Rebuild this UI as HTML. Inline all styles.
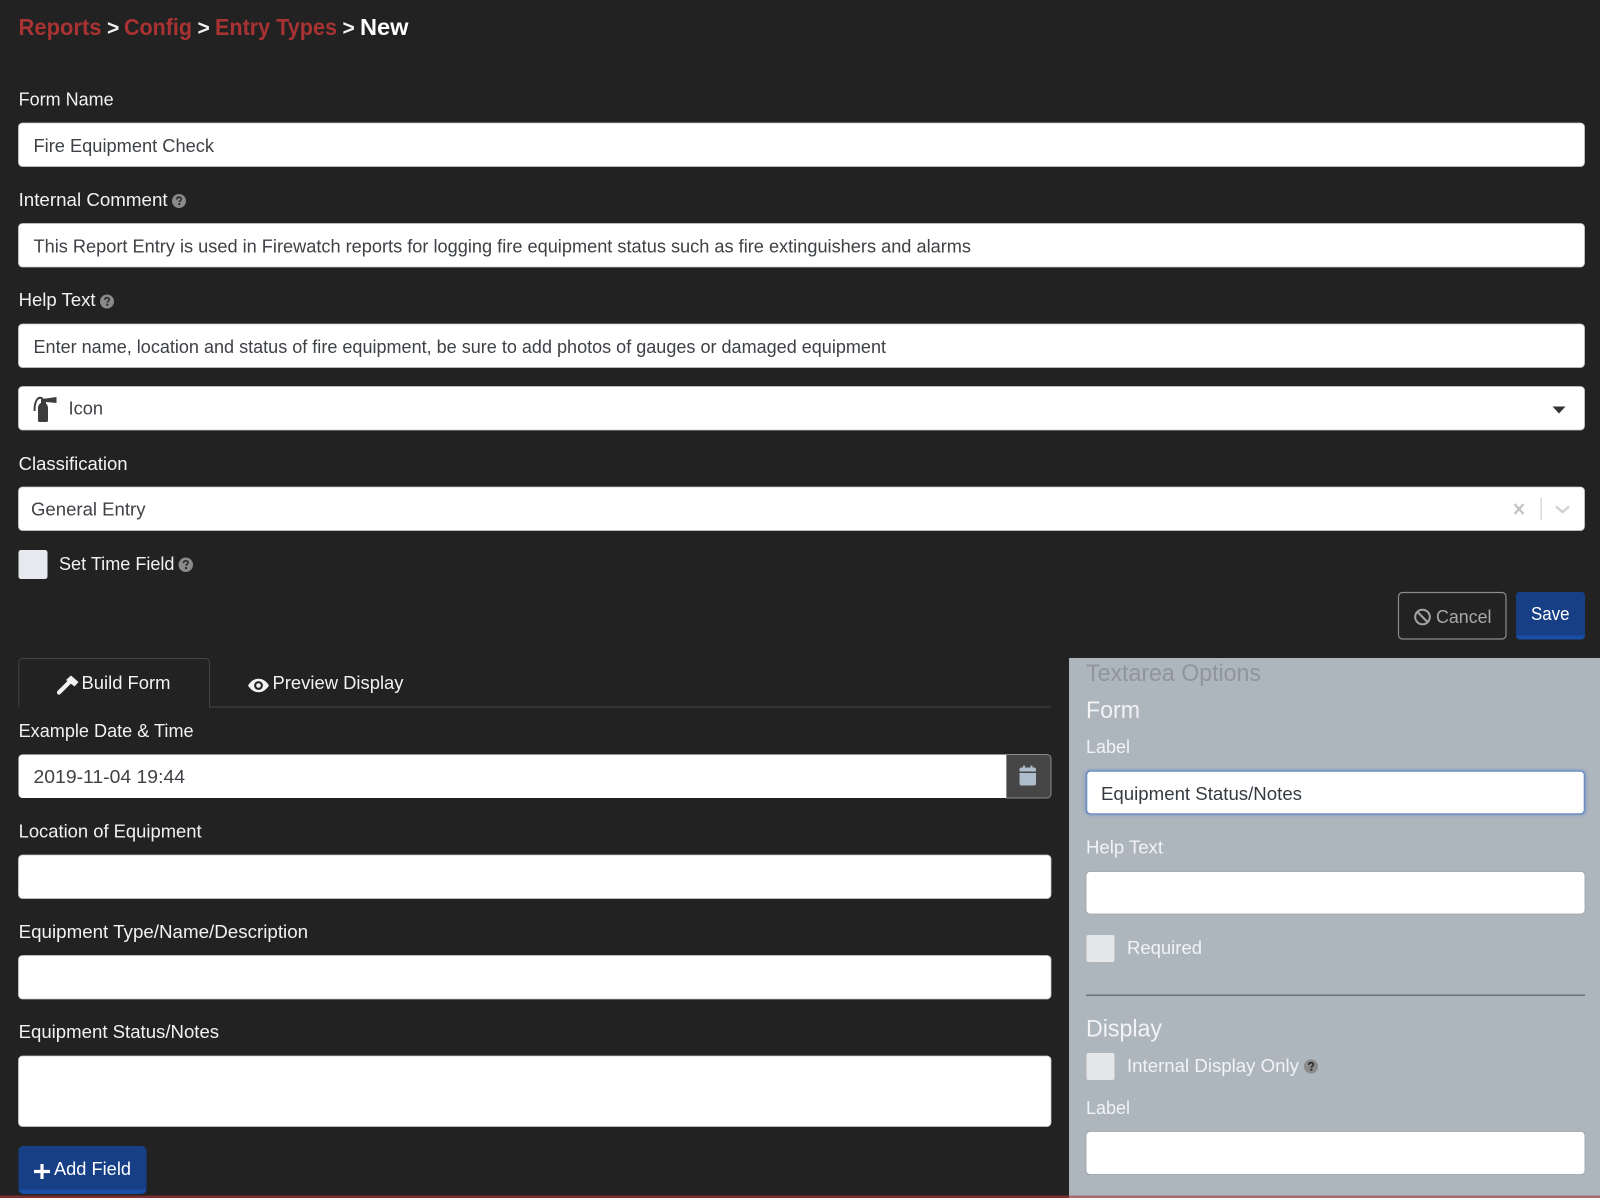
<!DOCTYPE html>
<html lang="en"><head><meta charset="utf-8"><title>New Entry Type</title>
<style>
html,body{margin:0;padding:0;background:#222;width:1600px;height:1198px;overflow:hidden}
svg{display:block}
text{font-family:"Liberation Sans",sans-serif;font-size:18.5px;fill:#f2f2f2}
.in{fill:#3e4145}
.p{fill:#f1f3f5}
.h{font-size:24px}
</style></head><body>
<svg xmlns="http://www.w3.org/2000/svg" width="1600" height="1198" viewBox="0 0 1600 1198">
<defs>
<symbol id="q" viewBox="0 0 14 14"><circle cx="7" cy="7" r="7" fill="#8a8a8a"/><path d="M4.8 5.4C4.9 3.900 5.900 3.200 7.100 3.200 8.400 3.200 9.300 4 9.300 5.100 9.300 6.600 7.300 6.600 7.300 8.100" fill="none" stroke="#2a2a2a" stroke-width="1.600"/><rect x="6.300" y="9.200" width="2" height="1.900" fill="#2a2a2a"/></symbol>
<filter id="glow" x="-5%" y="-30%" width="110%" height="160%"><feGaussianBlur stdDeviation="1.500"/></filter>
</defs>
<rect width="1600" height="1198" fill="#222"/>

<!-- breadcrumb -->
<g style="font-size:23.500px;font-weight:700">
<text x="18.500" y="35" textLength="83" lengthAdjust="spacingAndGlyphs" style="fill:#a93232;font-size:23.500px">Reports</text>
<text x="107" y="35" style="font-size:21px">&gt;</text>
<text x="124" y="35" textLength="68" lengthAdjust="spacingAndGlyphs" style="fill:#a93232;font-size:23.500px">Config</text>
<text x="197.500" y="35" style="font-size:21px">&gt;</text>
<text x="215" y="35" textLength="122" lengthAdjust="spacingAndGlyphs" style="fill:#a93232;font-size:23.500px">Entry Types</text>
<text x="342.500" y="35" style="font-size:21px">&gt;</text>
<text x="360" y="35" textLength="48.500" lengthAdjust="spacingAndGlyphs" style="font-size:23.500px;fill:#fff">New</text>
</g>

<!-- top form -->
<text x="18.600" y="105.500" textLength="95" lengthAdjust="spacingAndGlyphs">Form Name</text>
<rect x="18.500" y="123" width="1566" height="43.500" rx="4" fill="#fff" stroke="#c8c8c8" stroke-width=".8"/>
<text class="in" x="33.500" y="152.200" textLength="180.500" lengthAdjust="spacingAndGlyphs">Fire Equipment Check</text>

<text x="18.600" y="206" textLength="149" lengthAdjust="spacingAndGlyphs">Internal Comment</text>
<use href="#q" x="172" y="194" width="14" height="14"/>
<rect x="18.500" y="223.500" width="1566" height="43.500" rx="4" fill="#fff" stroke="#c8c8c8" stroke-width=".8"/>
<text class="in" x="33.500" y="252.500" textLength="937.500" lengthAdjust="spacingAndGlyphs">This Report Entry is used in Firewatch reports for logging fire equipment status such as fire extinguishers and alarms</text>

<text x="18.600" y="306" textLength="77" lengthAdjust="spacingAndGlyphs">Help Text</text>
<use href="#q" x="100" y="294.500" width="14" height="14"/>
<rect x="18.500" y="324" width="1566" height="43.500" rx="4" fill="#fff" stroke="#c8c8c8" stroke-width=".8"/>
<text class="in" x="33.500" y="353" textLength="852.500" lengthAdjust="spacingAndGlyphs">Enter name, location and status of fire equipment, be sure to add photos of gauges or damaged equipment</text>

<rect x="18.500" y="386.500" width="1566" height="43.500" rx="4" fill="#fff" stroke="#c8c8c8" stroke-width=".8"/>
<g fill="#3d3d3d">
<path d="M38 408C38 405.500 39.500 403.500 41 403L45 403C46.500 403.500 48 405.500 48 408L48 420.500C48 421.400 47.500 422 46.500 422L39.500 422C38.500 422 38 421.400 38 420.500Z"/>
<path d="M41 398.500H46L56.500 397V403L46 402V403.500H41Z"/>
<path d="M42.500 398.500C38 396 34.500 400.500 34.500 411" fill="none" stroke="#3d3d3d" stroke-width="1.900"/>
</g>
<text class="in" x="68.500" y="414.500" textLength="34.500" lengthAdjust="spacingAndGlyphs">Icon</text>
<path d="M1552.500 406.500H1565.500L1559 413.500Z" fill="#333"/>

<text x="18.600" y="470" textLength="109" lengthAdjust="spacingAndGlyphs">Classification</text>
<rect x="18.500" y="487" width="1566" height="43.500" rx="4" fill="#fff" stroke="#c8c8c8" stroke-width=".8"/>
<text class="in" x="31" y="515.300" textLength="114.500" lengthAdjust="spacingAndGlyphs">General Entry</text>
<path d="M1514.500 504L1523.500 514M1523.500 504L1514.500 514" stroke="#c4c4c4" stroke-width="2.400" fill="none"/>
<rect x="1540.500" y="498" width="1.200" height="22" fill="#d0d0d0"/>
<path d="M1556 506.500L1562.500 512L1569 506.500" stroke="#cfcfcf" stroke-width="2.400" fill="none"/>

<rect x="18.500" y="550" width="29" height="29" rx="2.500" fill="#e6e9ee"/>
<text x="59" y="570" textLength="115.500" lengthAdjust="spacingAndGlyphs">Set Time Field</text>
<use href="#q" x="178.500" y="557.500" width="14.500" height="14.500"/>

<!-- buttons -->
<rect x="1398.500" y="592.500" width="107.500" height="46.500" rx="4" fill="#222" stroke="#8d8d8d" stroke-width="1.200"/>
<circle cx="1422.500" cy="617" r="7.300" fill="none" stroke="#a5a5a5" stroke-width="2"/>
<path d="M1417.500 612L1427.500 622" stroke="#a5a5a5" stroke-width="2"/>
<text x="1436" y="623" textLength="55.500" lengthAdjust="spacingAndGlyphs" style="fill:#a8a8a8">Cancel</text>
<rect x="1516" y="592" width="69" height="47.500" rx="4" fill="#1a4da5"/>
<path d="M1516 596a4 4 0 0 1 4-4H1581a4 4 0 0 1 4 4V635.500H1516Z" fill="#163f86"/>
<text x="1531" y="620" textLength="38.500" lengthAdjust="spacingAndGlyphs" style="fill:#fff">Save</text>

<!-- tabs -->
<path d="M18.800 707V662.500a4 4 0 0 1 4-4H205.500a4 4 0 0 1 4 4V707H1051" fill="none" stroke="#444" stroke-width="1"/>
<path d="M59 692.500L70.500 681" stroke="#f2f2f2" stroke-width="4.200" stroke-linecap="round"/>
<path d="M66 680L71 675.500L78.500 682L74.500 686.500Z" fill="#f2f2f2"/>
<text x="81.500" y="689.200" textLength="89" lengthAdjust="spacingAndGlyphs">Build Form</text>
<path d="M248 685.500C251 680.800 254.500 678.800 258.500 678.800 262.500 678.800 266 680.800 269 685.500 266 690.200 262.500 692.200 258.500 692.200 254.500 692.200 251 690.200 248 685.500Z" fill="#f2f2f2"/>
<circle cx="258.500" cy="685.500" r="4.400" fill="#222"/>
<circle cx="258.500" cy="685.500" r="2.300" fill="#f2f2f2"/>
<text x="272.500" y="689.200" textLength="131" lengthAdjust="spacingAndGlyphs">Preview Display</text>

<!-- left form -->
<text x="18.600" y="737" textLength="175" lengthAdjust="spacingAndGlyphs">Example Date &amp; Time</text>
<path d="M22.500 754.500H1006.500V798H22.500a4 4 0 0 1-4-4V758.500a4 4 0 0 1 4-4Z" fill="#fff"/>
<text class="in" x="33.500" y="783" textLength="151.500" lengthAdjust="spacingAndGlyphs">2019-11-04 19:44</text>
<path d="M1006.500 754.500H1047a4 4 0 0 1 4 4V794a4 4 0 0 1-4 4H1006.500Z" fill="#464646" stroke="#8a8a8a" stroke-width="1"/>
<path d="M1019.500 773H1036V783.500a2 2 0 0 1-2 2H1021.500a2 2 0 0 1-2-2Z" fill="#aebccb"/>
<path d="M1019.500 771.500V769.500a2 2 0 0 1 2-2H1023V765.500H1025V767.500H1030.500V765.500H1032.500V767.500H1034a2 2 0 0 1 2 2V771.500Z" fill="#aebccb"/>

<text x="18.600" y="837.500" textLength="183" lengthAdjust="spacingAndGlyphs">Location of Equipment</text>
<rect x="18.500" y="855" width="1032.500" height="43.500" rx="4" fill="#fff" stroke="#c8c8c8" stroke-width=".8"/>
<text x="18.600" y="938" textLength="289.500" lengthAdjust="spacingAndGlyphs">Equipment Type/Name/Description</text>
<rect x="18.500" y="955.500" width="1032.500" height="43.500" rx="4" fill="#fff" stroke="#c8c8c8" stroke-width=".8"/>
<text x="18.600" y="1038" textLength="200.500" lengthAdjust="spacingAndGlyphs">Equipment Status/Notes</text>
<rect x="18.500" y="1056" width="1032.500" height="70.500" rx="4" fill="#fff" stroke="#c8c8c8" stroke-width=".8"/>

<rect x="18.500" y="1146" width="128" height="48" rx="5" fill="#1a4da5"/>
<path d="M18.500 1151a5 5 0 0 1 5-5H141.500a5 5 0 0 1 5 5V1189.500H18.500Z" fill="#163f86"/>
<path d="M34 1171.500H50M42 1164V1179" stroke="#fff" stroke-width="3.200"/>
<text x="54" y="1175" textLength="77" lengthAdjust="spacingAndGlyphs" style="fill:#fff">Add Field</text>

<!-- right panel -->
<rect x="1069" y="658" width="531" height="540" fill="#adb5bd"/>
<text class="h" x="1086" y="681" textLength="175" lengthAdjust="spacingAndGlyphs" style="fill:#8f959b">Textarea Options</text>
<text class="h p" x="1086" y="718" textLength="54" lengthAdjust="spacingAndGlyphs">Form</text>
<text class="p" x="1086" y="753" textLength="44" lengthAdjust="spacingAndGlyphs">Label</text>
<rect x="1085" y="770" width="501" height="45" rx="5" fill="#7b98c6" filter="url(#glow)"/>
<rect x="1086.500" y="771" width="498" height="43" rx="4" fill="#fff" stroke="#6f8fc2" stroke-width="1.600"/>
<text x="1101" y="800" textLength="201" lengthAdjust="spacingAndGlyphs" style="fill:#343a40">Equipment Status/Notes</text>
<text class="p" x="1086" y="853.500" textLength="77" lengthAdjust="spacingAndGlyphs">Help Text</text>
<rect x="1086" y="871.500" width="499" height="42.500" rx="4" fill="#fff" stroke="#9aa0a6" stroke-width=".8"/>
<rect x="1086.500" y="935" width="28" height="27" rx="2" fill="#e4e6e8"/>
<text class="p" x="1127" y="954" textLength="75" lengthAdjust="spacingAndGlyphs">Required</text>
<rect x="1086" y="994.500" width="499" height="1.500" fill="#68727c"/>
<text class="h p" x="1086" y="1036.500" textLength="76" lengthAdjust="spacingAndGlyphs">Display</text>
<rect x="1086.500" y="1053" width="28" height="27" rx="2" fill="#e4e6e8"/>
<text class="p" x="1127" y="1072" textLength="172" lengthAdjust="spacingAndGlyphs">Internal Display Only</text>
<use href="#q" x="1304" y="1059.500" width="14" height="14"/>
<text class="p" x="1086" y="1114" textLength="44" lengthAdjust="spacingAndGlyphs">Label</text>
<rect x="1086" y="1131.500" width="499" height="43" rx="4" fill="#fff" stroke="#9aa0a6" stroke-width=".8"/>

<!-- bottom bar -->
<rect x="0" y="1195.500" width="1069" height="2.500" fill="#7a2e2e"/>
<rect x="1069" y="1195.500" width="531" height="2.500" fill="#a8696d"/>
</svg>
</body></html>
